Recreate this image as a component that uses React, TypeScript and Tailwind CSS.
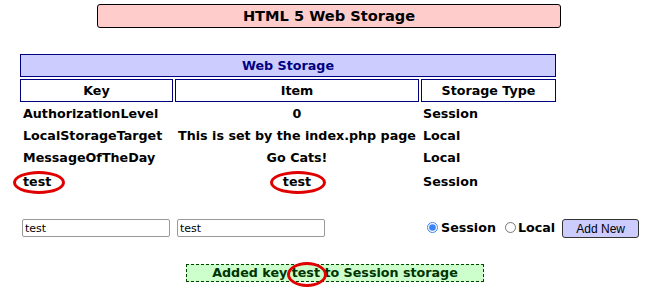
import React, { useState } from 'react';

type Row = { key: string; item: string; type: 'Session' | 'Local' };

const rows: Row[] = [
  { key: 'AuthorizationLevel', item: '0', type: 'Session' },
  { key: 'LocalStorageTarget', item: 'This is set by the index.php page', type: 'Local' },
  { key: 'MessageOfTheDay', item: 'Go Cats!', type: 'Local' },
  { key: 'test', item: 'test', type: 'Session' },
];

const Ring: React.FC<{ className: string }> = ({ className }) => (
  <div className={`pointer-events-none absolute rounded-[50%] border-[3px] border-[#e00000] ${className}`} />
);

export default function App() {
  const [storage, setStorage] = useState<'Session' | 'Local'>('Session');

  return (
    <div
      className="relative h-[297px] w-[663px] overflow-hidden bg-white text-[12.7px] font-bold text-black"
      style={{ fontFamily: '"DejaVu Sans", Verdana, sans-serif' }}
    >
      <div className="ml-[97px] mt-[4px] flex h-[24px] w-[464px] items-center justify-center rounded-[3px] border border-black bg-[#ffcccc] text-[14.6px]">
        HTML 5 Web Storage
      </div>

      <table className="ml-[18px] mt-[24px] w-[540px] border-separate border-spacing-[2px]">
        <thead>
          <tr>
            <th colSpan={3} className="h-[23px] border border-[#000080] bg-[#ccccff] p-0 text-[#000080]">
              Web Storage
            </th>
          </tr>
          <tr>
            <th className="h-[23px] w-[153px] border border-[#000080] p-0">Key</th>
            <th className="h-[23px] w-[244px] border border-[#000080] p-0">Item</th>
            <th className="h-[23px] border border-[#000080] p-0">Storage Type</th>
          </tr>
        </thead>
        <tbody>
          {rows.map((row, i) => (
            <tr key={row.key}>
              <td className={`p-0 pl-[3px] text-left ${i === 3 ? 'h-[22px] pt-[2px]' : 'h-[20px]'}`}>{row.key}</td>
              <td className={`p-0 text-center ${i === 3 ? 'h-[22px] pt-[2px]' : 'h-[20px]'}`}>{row.item}</td>
              <td className={`p-0 pl-[2px] text-left ${i === 3 ? 'h-[22px] pt-[2px]' : 'h-[20px]'}`}>{row.type}</td>
            </tr>
          ))}
        </tbody>
      </table>

      <div className="mt-[24px] flex h-[20px] items-center">
        <input
          defaultValue="test"
          className="ml-[22px] h-[18px] w-[148px] rounded-[2px] border border-[#999] px-[2px] text-[11px] font-normal"
        />
        <input
          defaultValue="test"
          className="ml-[7px] h-[18px] w-[148px] rounded-[2px] border border-[#999] px-[2px] text-[11px] font-normal"
        />
        <label className="ml-[102px] flex items-center">
          <input
            type="radio"
            checked={storage === 'Session'}
            onChange={() => setStorage('Session')}
            className="m-0 mr-[3px] h-[11px] w-[11px] accent-[#3b82f6]"
          />
          Session
        </label>
        <label className="ml-[9px] flex items-center">
          <input
            type="radio"
            checked={storage === 'Local'}
            onChange={() => setStorage('Local')}
            className="m-0 mr-[2px] h-[11px] w-[11px]"
          />
          Local
        </label>
        <button
          className="ml-[7px] h-[19px] w-[77px] rounded-[3px] border border-[#333] bg-[#ccccff] text-[12px] font-normal text-black"
          style={{ fontFamily: '"Liberation Sans", Arial, sans-serif' }}
        >
          Add New
        </button>
      </div>

      <div className="ml-[186px] mt-[26px] flex h-[18px] w-[298px] items-center justify-center border border-dashed border-[#004400] bg-[#ccffcc] text-[#003300]">
        Added key test to Session storage
      </div>

      <Ring className="left-[13px] top-[171px] h-[23px] w-[52px]" />
      <Ring className="left-[270px] top-[171px] h-[23px] w-[56px]" />
      <Ring className="left-[287px] top-[262px] h-[25px] w-[40px]" />
    </div>
  );
}
